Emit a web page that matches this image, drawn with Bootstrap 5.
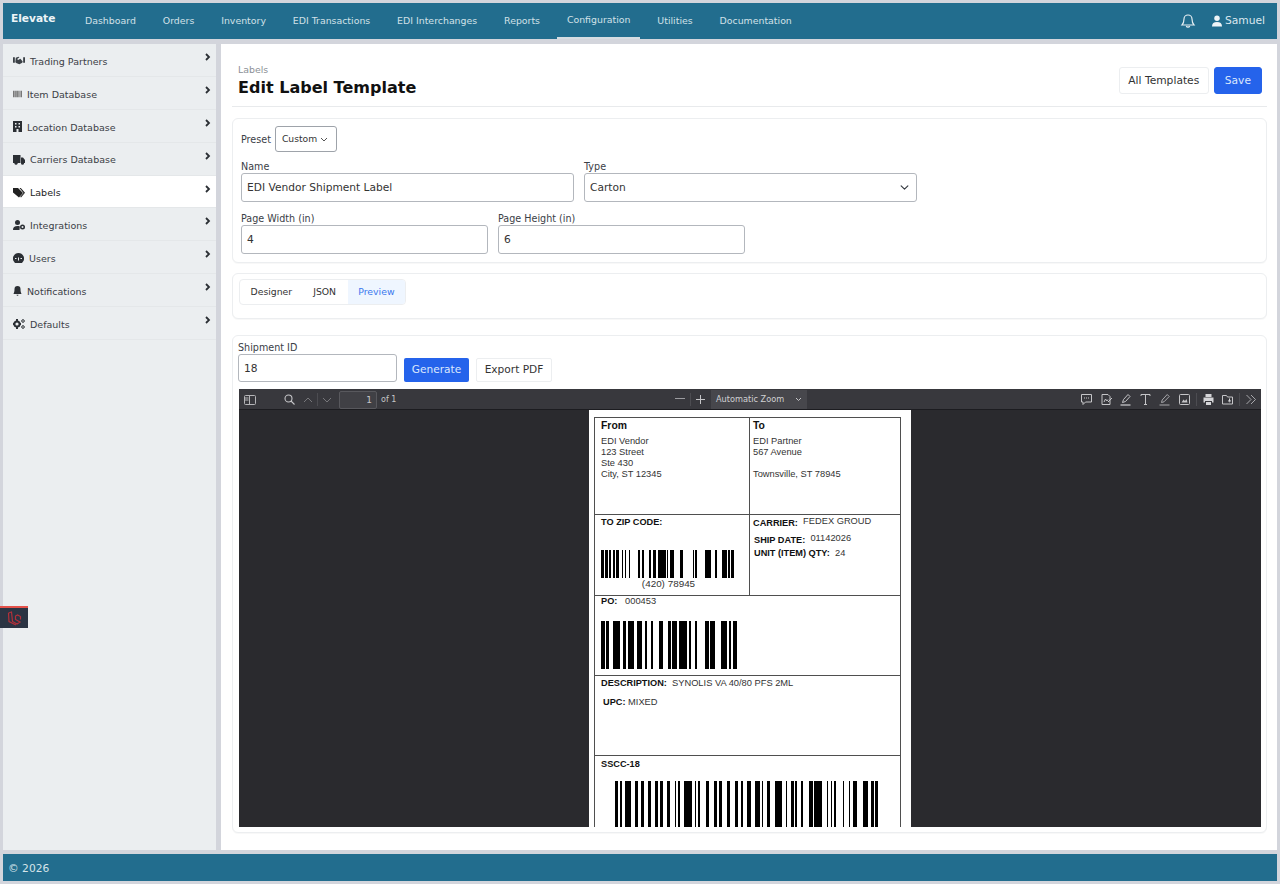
<!DOCTYPE html>
<html lang="en">
<head>
  <meta charset="UTF-8" />
  <meta name="viewport" content="width=device-width, initial-scale=1.0"/>
  <title>Edit Label Template</title>
  <link href="https://cdn.jsdelivr.net/npm/bootstrap@5.3.3/dist/css/bootstrap.min.css" rel="stylesheet">
  <style>
    html, body { height: 884px; overflow: hidden; }
    body {
      background-color: #d3d5dc;
      font-family: "DejaVu Sans", sans-serif;
      font-size: 10.4px;
      color: #333;
      padding: 3px;
    }
    .shell { height: 878px; display: flex; flex-direction: column; }

    .topbar { height: 36px; background: #226d8e; color: #dce8ee; padding: 0 12px 0 8px; flex: none; }
    .brand { font-weight: 700; font-size: 10.6px; color: #eef4f7; width: 62px; margin-top: -4px; }
    .toplink { color: #d2e1e8; font-size: 9.4px; padding: 0 10px; margin: 0 3.45px; height: 36px; display: flex; align-items: center; }
    .toplink.on { border-bottom: 2px solid #d5dde2; }
    .toplink-first { margin-left: 2px; }
    .usericon { margin: 0 3px 0 16px; }
    .uname { font-size: 10.7px; color: #dce8ee; }

    .workarea { flex: 1; display: flex; gap: 5px; margin-top: 5px; min-height: 0; }
    .sidebar { width: 213px; background: #ebeef0; flex: none; }
    .sideitem { height: 32.9px; border-bottom: 1px solid #e4e7e9; padding: 4px 5px 0 10px; color: #3b4046; font-size: 9.5px; display: flex; align-items: center; gap: 5px; }
    .sideitem.on { background: #fff; color: #222; }
    .sideitem svg:first-child { margin-top: -2px; }
    .sideitem .arrow { margin-left: auto; margin-top: -10px; }

    .mainpane { flex: 1; background: #fff; padding: 0 10px 0 11px; min-width: 0; }
    .pagehead { height: 63px; border-bottom: 1px solid #e8eaec; padding: 21px 5px 0 6px; }
    .crumb { font-size: 9.4px; color: #8b9096; line-height: 10px; }
    .pagetitle { font-size: 16.05px; font-weight: 700; color: #111; line-height: 22px; margin: 2px 0 0; }
    .headbtns { margin-top: 2px; gap: 5px; }
    .btn-plain, .btn-blue { font-size: 10.7px; height: 27px; padding: 1px 8.500px 0; border-radius: 3px; display: flex; align-items: center; }
    .btn-plain { background: #fff; border: 1px solid #eceef0; color: #333; }
    .btn-blue { background: #2563eb; border: 1px solid #2563eb; color: #dbe7fd; padding: 1px 10px 0; }

    .panel { border: 1px solid #eceef0; border-radius: 6px; box-shadow: 0 1px 1px rgba(0,0,0,.03); background: #fff; }
    .panel-form { margin-top: 11px; height: 145px; padding: 7px 8px 0 8px; }
    .panel-tabs { margin-top: 10px; height: 46px; padding: 5px 6px; }
    .panel-prev { margin-top: 16px; height: 498px; padding: 6px 5px 0 5px; }

    .fieldlabel { font-size: 9.6px; color: #3b4046; line-height: 12px; display: block; margin: 0; }
    .presetlabel { padding-top: 1px; }
    .fieldrow { gap: 10px; }
    .fieldrow-name { margin-top: 9px; }
    .fieldrow-page { margin-top: 11px; }
    .fieldbox { height: 29px; border: 1px solid #b3b7bd; border-radius: 3px; font-size: 10.65px; color: #333; padding: 0 5px; box-shadow: none; }
    .form-select.fieldbox { padding: 0 5px; background-size: 13px 9px; background-position: right 5px center; }
    .w-half { width: 333px; }
    .w-third { width: 247px; }
    .presetbox { width: 62px; height: 26px; border: 1px solid #9ea3aa; border-radius: 3px; font-size: 9.2px; color: #333; padding-left: 6px; gap: 3px; }

    .tabset { width: 167px; height: 26px; border: 1px solid #eceef0; border-radius: 4px; overflow: hidden; font-size: 9.3px; }
    .tabitem { padding: 0 10.500px; display: flex; align-items: center; color: #333; }
    .tabitem.on { background: #eff6ff; color: #3b78ee; margin-left: auto; }

    .shiprow { gap: 7px; }
    .shipbox { width: 159px; height: 28px; }
    .btn-gen, .btn-exp { font-size: 10.6px; height: 24px; padding: 0; border-radius: 2px; display: flex; align-items: center; white-space: nowrap; justify-content: center; }
    .btn-gen { background: #2563eb; color: #dbe7fd; width: 65px; }
    .btn-exp { background: #fff; border: 1px solid #eceef0; color: #333; width: 76px; }

    .viewer { margin: 7px 0 0 1px; height: 438px; width: 1022px; background: #2a2a2e; overflow: hidden; }
    .pdfbar { height: 21px; background: #38383d; border-bottom: 1px solid #1c1c20; color: #c5c5c8; font-size: 8px; padding: 1px 4px 0 5px; position: relative; }
    .pagebox { width: 38px; height: 18px; border: 1px solid #58585d; background: #404045; border-radius: 2px; text-align: right; padding: 2px 4px 0 0; font-size: 9px; margin-left: 7px; }
    .pdfsep { width: 1px; height: 13px; background: #4c4c51; margin: 0 4px; }
    .searchicon { margin-left: 28px; }
    .zoomgroup { position: absolute; left: 436px; top: 0; gap: 5px; }
    .zoomsel { width: 96px; height: 19px; background: #47474c; padding: 0 5px; margin-left: 1px; color: #d0d0d3; font-size: 8.2px; }
    .tools { margin-left: auto; gap: 6.500px; }
    .tools .pdfsep { margin: 0 -1.500px; }

    .sheet { width: 322px; height: 417px; margin: 0 0 0 350px; background: #fff; padding: 7px 0 0 5px; overflow: hidden; }
    .labelgrid {
      width: 307px; height: 420px;
      border: 1px solid #4f4f4f; border-bottom: 0;
      display: grid; grid-template-columns: 155px 151px; grid-template-rows: 97px 81px 80px 80px 1fr;
      font-family: "Liberation Sans", sans-serif; font-size: 9.3px; color: #333; line-height: 11px;
    }
    .cell { border-bottom: 1px solid #4f4f4f; padding: 2px 5px 2px 6px; }
    .cell.divider { border-right: 1px solid #4f4f4f; }
    .cell.wide { grid-column: 1 / 3; }
    .cell.lastrow { border-bottom: 0; padding-top: 3px; }
    .cell.rightcol { padding-left: 3px; }
    .cell.carrier { padding: 1px 0 0 3px; }
    .cell.ponum { padding-top: 0; }
    .cell b { color: #111; font-size: 9.2px; }
    .lifted { vertical-align: 2px; }
    .shipline { margin: 4px 0 0 1px; }
    .qtyline { margin: 2px 0 0 1px; }
    .upcline { margin: 8px 0 0 2px; }
    .headline { font-weight: 700; font-size: 10.4px; color: #111; margin-bottom: 4px; line-height: 12px; }
    .barsvg { display: block; }
    .zipbar { margin-top: 22px; }
    .pobar { margin-top: 14px; }
    .ssccbar { margin: 11px 0 0 14px; }
    .zipcaption { width: 135px; font-size: 9.9px; line-height: 11px; margin-top: 0; text-align: center; }
    .debugtab { position: absolute; left: 0; top: 606px; width: 28px; height: 22px; background: #2b3443; border-top: 2px solid #e4514a; display: flex; align-items: center; justify-content: center; }

    .bottombar { height: 27px; background: #226d8e; color: #d6e4ea; margin-top: 4px; padding: 3px 5px 0; font-size: 10.7px; display: flex; align-items: center; flex: none; }
  </style>
</head>
<body>
<div class="shell">

  <nav class="topbar d-flex align-items-center">
    <div class="brand">Elevate</div>
    <span class="toplink toplink-first">Dashboard</span>
    <span class="toplink">Orders</span>
    <span class="toplink">Inventory</span>
    <span class="toplink">EDI Transactions</span>
    <span class="toplink">EDI Interchanges</span>
    <span class="toplink">Reports</span>
    <span class="toplink on">Configuration</span>
    <span class="toplink">Utilities</span>
    <span class="toplink">Documentation</span>
    <div class="ms-auto d-flex align-items-center">
      <svg width="16" height="16" viewBox="0 0 16 16" fill="none" stroke="#e6eef2" stroke-width="1.2"><path d="M8 2a4 4 0 0 1 4 4c0 3 .6 4.400 2 6H2c1.400-1.600 2-3 2-6a4 4 0 0 1 4-4z"/><path d="M6.300 13a1.800 1.800 0 0 0 3.400 0"/></svg>
      <svg class="usericon" width="10" height="12" viewBox="0 0 11 12" fill="#eef4f7"><circle cx="5.500" cy="3" r="3"/><path d="M0 12c0-3.500 2-5 5.500-5s5.500 1.500 5.500 5z"/></svg>
      <span class="uname">Samuel</span>
    </div>
  </nav>

  <div class="workarea">
    <aside class="sidebar">
      <div class="sideitem"><svg width="12" height="9" viewBox="0 0 13 9" fill="#3b4046"><path d="M0 1h2v6H0zM11 1h2v6h-2zM3 1.500 6 .500l1 .5-2.500 2 1 1L8 2.500l2.500 3-.5 1.500-3 1.500-3-1-1.500-1z"/></svg><span>Trading Partners</span><svg class="arrow" width="6" height="8" viewBox="0 0 6 8" fill="none" stroke="#2b2f34" stroke-width="1.800"><path d="M1 1l3 3-3 3"/></svg></div>
      <div class="sideitem"><svg width="9" height="8" viewBox="0 0 11 8" fill="#777"><path d="M0 0h2v8H0zM2.500 0h1v8h-1zM4 0h2v8H4zM6.500 0h1v8h-1zM8 0h1v8H8zM9.500 0H11v8H9.500z"/></svg><span>Item Database</span><svg class="arrow" width="6" height="8" viewBox="0 0 6 8" fill="none" stroke="#2b2f34" stroke-width="1.800"><path d="M1 1l3 3-3 3"/></svg></div>
      <div class="sideitem"><svg width="9" height="11" viewBox="0 0 9 11" fill="#2b2f34"><path fill-rule="evenodd" d="M0 0h9v11H0zM2 2v1.500h1.500V2zM5.500 2v1.500H7V2zM2 5v1.500h1.500V5zM5.500 5v1.500H7V5zM3.500 8v3h2V8z"/></svg><span>Location Database</span><svg class="arrow" width="6" height="8" viewBox="0 0 6 8" fill="none" stroke="#2b2f34" stroke-width="1.800"><path d="M1 1l3 3-3 3"/></svg></div>
      <div class="sideitem"><svg width="12" height="10" viewBox="0 0 12 10" fill="#2b2f34"><path d="M0 0h7.500v8H0zM8 2.500h2L12 5v3H8z"/><circle cx="3" cy="8.300" r="1.500"/><circle cx="9.500" cy="8.300" r="1.500"/></svg><span>Carriers Database</span><svg class="arrow" width="6" height="8" viewBox="0 0 6 8" fill="none" stroke="#2b2f34" stroke-width="1.800"><path d="M1 1l3 3-3 3"/></svg></div>
      <div class="sideitem on"><svg width="12" height="10" viewBox="0 0 12 10" fill="#222"><path d="M0 0h5l5 5-4 4.500-6-5z"/><path d="M6.500 0h1.300L12 4.800 8 9.500l-.8-.8L10.500 5z"/></svg><span>Labels</span><svg class="arrow" width="6" height="8" viewBox="0 0 6 8" fill="none" stroke="#2b2f34" stroke-width="1.800"><path d="M1 1l3 3-3 3"/></svg></div>
      <div class="sideitem"><svg width="12" height="10" viewBox="0 0 12 10" fill="#2b2f34"><circle cx="4.500" cy="2.500" r="2.500"/><path d="M0 10c0-3 1.500-4 4.500-4 1 0 1.800.1 2.300.4L6.500 10z"/><circle cx="9.500" cy="7" r="2.500"/><circle cx="9.500" cy="7" r="1" fill="#ebeef0"/></svg><span>Integrations</span><svg class="arrow" width="6" height="8" viewBox="0 0 6 8" fill="none" stroke="#2b2f34" stroke-width="1.800"><path d="M1 1l3 3-3 3"/></svg></div>
      <div class="sideitem"><svg width="11" height="10" viewBox="0 0 11 10" fill="#2b2f34"><path fill-rule="evenodd" d="M5.500 0a5.500 5.500 0 0 1 4.400 8.800L9 10H2l-.9-1.200A5.500 5.500 0 0 1 5.500 0zM5 4.500v3h1v-3zM2 5v1h1.500V5zM7.500 5v1H9V5z"/></svg><span>Users</span><svg class="arrow" width="6" height="8" viewBox="0 0 6 8" fill="none" stroke="#2b2f34" stroke-width="1.800"><path d="M1 1l3 3-3 3"/></svg></div>
      <div class="sideitem"><svg width="9" height="10" viewBox="0 0 8 10" fill="#2b2f34"><path d="M4 0a3 3 0 0 1 3 3c0 2 .3 3.400 1 5H0c.7-1.600 1-3 1-5a3 3 0 0 1 3-3zM3 8.800h2a1 1 0 0 1-2 0z"/></svg><span>Notifications</span><svg class="arrow" width="6" height="8" viewBox="0 0 6 8" fill="none" stroke="#2b2f34" stroke-width="1.800"><path d="M1 1l3 3-3 3"/></svg></div>
      <div class="sideitem"><svg width="12" height="10" viewBox="0 0 12 10" fill="#2b2f34"><circle cx="4" cy="5" r="2.600" fill="none" stroke="#2b2f34" stroke-width="2"/><path d="M3 0h2v2H3zM3 8h2v2H3zM0 4h1.500v2H0zM6.500 4H8v2H6.500z"/><circle cx="10" cy="2" r="1.300" fill="none" stroke="#2b2f34"/><circle cx="10" cy="8" r="1.300" fill="none" stroke="#2b2f34"/></svg><span>Defaults</span><svg class="arrow" width="6" height="8" viewBox="0 0 6 8" fill="none" stroke="#2b2f34" stroke-width="1.800"><path d="M1 1l3 3-3 3"/></svg></div>
    </aside>

    <main class="mainpane">
      <div class="pagehead d-flex justify-content-between">
        <div>
          <div class="crumb">Labels</div>
          <h1 class="pagetitle">Edit Label Template</h1>
        </div>
        <div class="headbtns d-flex align-items-start">
          <button class="btn-plain" type="button">All Templates</button>
          <button class="btn-blue" type="button">Save</button>
        </div>
      </div>

      <section class="panel panel-form">
        <div class="d-flex align-items-center gap-1">
          <span class="fieldlabel presetlabel">Preset</span>
          <div class="presetbox d-flex align-items-center">Custom
            <svg width="8" height="5" viewBox="0 0 8 5" fill="none" stroke="#555"><path d="M1 1l3 3 3-3"/></svg>
          </div>
        </div>
        <div class="d-flex fieldrow fieldrow-name">
          <div class="w-half">
            <label class="fieldlabel">Name</label>
            <input class="form-control fieldbox" value="EDI Vendor Shipment Label">
          </div>
          <div class="w-half">
            <label class="fieldlabel">Type</label>
            <select class="form-select fieldbox"><option>Carton</option></select>
          </div>
        </div>
        <div class="d-flex fieldrow fieldrow-page">
          <div class="w-third">
            <label class="fieldlabel">Page Width (in)</label>
            <input class="form-control fieldbox" value="4">
          </div>
          <div class="w-third">
            <label class="fieldlabel">Page Height (in)</label>
            <input class="form-control fieldbox" value="6">
          </div>
        </div>
      </section>

      <section class="panel panel-tabs">
        <div class="tabset d-flex">
          <span class="tabitem">Designer</span>
          <span class="tabitem">JSON</span>
          <span class="tabitem on">Preview</span>
        </div>
      </section>

      <section class="panel panel-prev">
        <label class="fieldlabel">Shipment ID</label>
        <div class="d-flex align-items-end shiprow">
          <input class="form-control fieldbox shipbox" value="18">
          <button class="btn btn-gen border-0" type="button">Generate</button>
          <button class="btn btn-exp" type="button">Export PDF</button>
        </div>

        <div class="viewer">
          <div class="pdfbar d-flex align-items-center">
            <svg width="12" height="10" viewBox="0 0 12 10" fill="none" stroke="#b5b5b8"><rect x=".5" y=".5" width="11" height="9" rx="1"/><path d="M5.500 .5v9M1 3h3.500M1 5h3.500"/></svg>
            <svg class="searchicon" width="11" height="11" viewBox="0 0 11 11" fill="none" stroke="#c5c5c8" stroke-width="1.100"><circle cx="4.500" cy="4.500" r="3.500"/><path d="M7 7l3.500 3.500"/></svg>
            <svg class="ms-2" width="10" height="6" viewBox="0 0 10 6" fill="none" stroke="#77777b"><path d="M1 5l4-4 4 4"/></svg>
            <span class="pdfsep"></span>
            <svg width="10" height="6" viewBox="0 0 10 6" fill="none" stroke="#77777b"><path d="M1 1l4 4 4-4"/></svg>
            <div class="pagebox">1</div>
            <span class="ms-1">of 1</span>

            <div class="zoomgroup d-flex align-items-center h-100">
              <svg width="10" height="2" viewBox="0 0 10 2" fill="#9c9ca0"><path d="M0 0h10v1H0z"/></svg>
              <span class="pdfsep m-0"></span>
              <svg width="9" height="9" viewBox="0 0 9 9" fill="#c5c5c8"><path d="M4 0h1v4h4v1H5v4H4V5H0V4h4z"/></svg>
              <div class="zoomsel d-flex align-items-center justify-content-between">Automatic Zoom
                <svg width="7" height="5" viewBox="0 0 7 5" fill="none" stroke="#c5c5c8"><path d="M1 1l2.500 2.500L6 1"/></svg>
              </div>
            </div>

            <div class="tools d-flex align-items-center">
              <svg width="13" height="13" viewBox="0 0 13 13" fill="none" stroke="#c5c5c8"><path d="M1.500 1.500h10v7.500h-6l-2.500 2.500V9h-1.500z"/><path d="M4 5h5" stroke-dasharray="1 1"/></svg>
              <svg width="13" height="13" viewBox="0 0 13 13" fill="none" stroke="#c5c5c8"><path d="M2 1.500h6l2 2v8H2zM4 9l1.500-3L7 8l1-1.500M8 9l4-4"/></svg>
              <svg width="13" height="13" viewBox="0 0 13 13" fill="none" stroke="#c5c5c8"><path d="M1.500 12h10" stroke-width="1.300"/><path d="M3.500 9.500l1-3 4.500-5 2 2-4.500 5z"/></svg>
              <svg width="13" height="13" viewBox="0 0 13 13" fill="none" stroke="#c5c5c8"><path d="M2 3V1.500h9V3M6.500 1.500v10M5 11.500h3"/></svg>
              <svg width="13" height="13" viewBox="0 0 13 13" fill="none" stroke="#a8a8ac"><path d="M1.500 12h10"/><path d="M3.500 9.500l.7-2.500 5-5.500 2 2-5.200 5.300z"/></svg>
              <svg width="13" height="13" viewBox="0 0 13 13" fill="none" stroke="#c5c5c8"><rect x="1.500" y="1.500" width="10" height="10" rx="1"/><path d="M3.500 9.500l2-3 1.500 1.500 1.500-2 1 3.500z" fill="#c5c5c8" stroke="none"/></svg>
              <span class="pdfsep"></span>
              <svg width="13" height="13" viewBox="0 0 13 13" fill="#d5d5d8"><path d="M3.500 1h6v3h-6zM1.500 4.500h10v5H10V8H3v1.500H1.500zM4 9h5v3H4z"/></svg>
              <svg width="13" height="13" viewBox="0 0 13 13" fill="none" stroke="#c5c5c8"><path d="M1.500 2.500h4l1 1.500h5v7h-10z"/><path d="M8.500 5.500v3M7 7.500l1.500 1.300L10 7.500" stroke="#d5d5d8"/></svg>
              <span class="pdfsep"></span>
              <svg width="12" height="11" viewBox="0 0 12 11" fill="none" stroke="#a8a8ac"><path d="M1.500 1l4.500 4.500L1.500 10M6 1l4.500 4.500L6 10"/></svg>
            </div>
          </div>

          <div class="sheet">
            <div class="labelgrid">
              <div class="cell divider">
                <div class="headline">From</div>
                EDI Vendor<br>123 Street<br>Ste 430<br>City, ST 12345
              </div>
              <div class="cell rightcol">
                <div class="headline">To</div>
                EDI Partner<br>567 Avenue<br><br>Townsville, ST 78945
              </div>
              <div class="cell divider">
                <b>TO ZIP CODE:</b>
                <svg class="barsvg zipbar" id="barZip" width="140" height="28"></svg>
                <div class="zipcaption">(420) 78945</div>
              </div>
              <div class="cell carrier">
                <div><b>CARRIER:</b>&nbsp; <span class="lifted">FEDEX GROUD</span></div>
                <div class="shipline"><b>SHIP DATE:</b>&nbsp; <span class="lifted">01142026</span></div>
                <div class="qtyline"><b>UNIT (ITEM) QTY:</b>&nbsp; 24</div>
              </div>
              <div class="cell wide ponum">
                <b>PO:</b>&nbsp;&nbsp; 000453
                <svg class="barsvg pobar" id="barPo" width="140" height="48"></svg>
              </div>
              <div class="cell wide">
                <b>DESCRIPTION:</b>&nbsp; SYNOLIS VA 40/80 PFS 2ML
                <div class="upcline"><b>UPC:</b> MIXED</div>
              </div>
              <div class="cell wide lastrow">
                <b>SSCC-18</b>
                <svg class="barsvg ssccbar" id="barSscc" width="270" height="46"></svg>
              </div>
            </div>
          </div>
        </div>
      </section>
    </main>
  </div>

  <footer class="bottombar">© 2026</footer>
</div>

<div class="debugtab">
  <svg width="15" height="15" viewBox="0 0 15 15" fill="none" stroke="#b3303a" stroke-width="1.200"><path d="M1.500 2l3-1 1 9.500 4.500 2.500 3-2-4.500-2.500V5l2-1 3 1.500v3"/><path d="M1.500 2l.5 8.500L9 14"/></svg>
</div>

<script>
  // [x, width] of each bar, read off the label in the viewer
  const barSets = {
    barZip: [[0,3],[4,3],[8,2],[12,2],[15,3],[21,1],[24,1],[28,1],[37,2],[41,2],[48,2],[52,3],[57,8],[66,1],[69,4],[79,3],[92,1],[94,2],[104,6],[114,2],[121,5],[127,2],[130,3]],
    barPo: [[0,4],[5,3],[12,7],[22,3],[27,6],[36,5],[44,2],[50,2],[58,4],[67,3],[71,5],[78,8],[88,2],[94,2],[104,4],[109,5],[120,6],[128,2],[132,4]],
    barSscc: [[0,3],[5,2],[10,6],[20,3],[26,3],[33,3],[40,3],[45,3],[52,3],[60,1],[63,2],[69,8],[80,1],[83,2],[91,3],[99,3],[104,3],[112,3],[120,3],[126,2],[132,4],[140,5],[147,1],[152,3],[160,7],[171,1],[176,3],[180,2],[186,2],[194,4],[199,8],[212,1],[216,1],[219,2],[228,1],[234,1],[238,4],[248,5],[256,3],[260,3]]
  };
  Object.entries(barSets).forEach(([id, bars]) => {
    const svg = document.getElementById(id);
    const h = svg.getAttribute('height');
    svg.innerHTML = bars.map(b => `<rect x="${b[0]}" y="0" width="${b[1]}" height="${h}" fill="#000"/>`).join('');
  });
</script>
<script src="https://cdn.jsdelivr.net/npm/bootstrap@5.3.3/dist/js/bootstrap.bundle.min.js"></script>
</body>
</html>
